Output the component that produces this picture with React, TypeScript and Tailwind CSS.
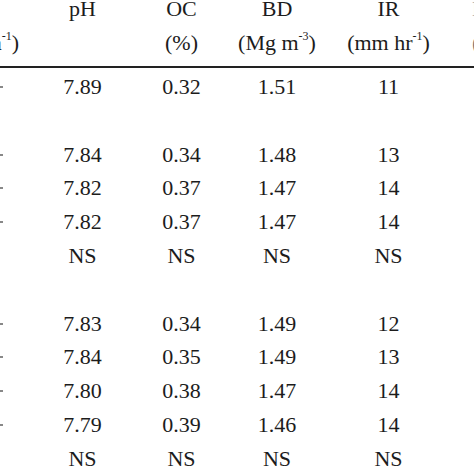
import React from 'react';

// rows of the soil table; null = empty spacer row
const rows: (string[] | null)[] = [
  ['7.89', '0.32', '1.51', '11'],
  null,
  ['7.84', '0.34', '1.48', '13'],
  ['7.82', '0.37', '1.47', '14'],
  ['7.82', '0.37', '1.47', '14'],
  ['NS', 'NS', 'NS', 'NS'],
  null,
  ['7.83', '0.34', '1.49', '12'],
  ['7.84', '0.35', '1.49', '13'],
  ['7.80', '0.38', '1.47', '14'],
  ['7.79', '0.39', '1.46', '14'],
  ['NS', 'NS', 'NS', 'NS'],
];

const Sup = ({ children }: { children: React.ReactNode }) => (
  <span className="relative -top-[7px] text-[12px]">{children}</span>
);

const cols = 'grid grid-cols-[33px_99px_99px_92px_131px_1fr]';
const cell = 'h-[33.8px] flex items-center justify-center whitespace-nowrap';
const top = 'h-[26.4px] pt-[2.4px] flex items-start justify-center whitespace-nowrap leading-[14px]';

export default function App() {
  return (
    <div className="w-[474px] h-[474px] overflow-hidden bg-white text-[#1c1c1c] font-['Liberation_Serif',serif] text-[22px] leading-none">
      {/* header */}
      <div className={cols}>
        <div className={top}></div>
        <div className={top}>pH</div>
        <div className={top}>OC</div>
        <div className={top}>BD</div>
        <div className={top}>IR</div>
        <div className={`${top} justify-start pl-[18px] text-[#999]`}>N</div>
      </div>
      <div className={cols}>
        <div className={`${cell} justify-end pr-[14px]`}>
          (t ha<Sup>-1</Sup>)
        </div>
        <div className={cell}></div>
        <div className={cell}>(%)</div>
        <div className={cell}>
          (Mg m<Sup>-3</Sup>)
        </div>
        <div className={cell}>
          (mm hr<Sup>-1</Sup>)
        </div>
        <div className={`${cell} justify-start pl-[18px] text-[#777]`}>(</div>
      </div>

      <div className="mt-[6px] border-t-2 border-[#222] pt-[2px]">
        {rows.map((r, i) => (
          <div key={i} className={cols}>
            <div className={`${cell} justify-start`}>
              {r && r[0] !== 'NS' && <span className="w-[3px] h-[2px] bg-[#888]"></span>}
            </div>
            {r ? (
              r.map((v, j) => (
                <div key={j} className={cell}>
                  {v}
                </div>
              ))
            ) : (
              <>
                <div className={cell}></div>
                <div className={cell}></div>
                <div className={cell}></div>
                <div className={cell}></div>
              </>
            )}
            <div className={cell}></div>
          </div>
        ))}
      </div>
    </div>
  );
}
